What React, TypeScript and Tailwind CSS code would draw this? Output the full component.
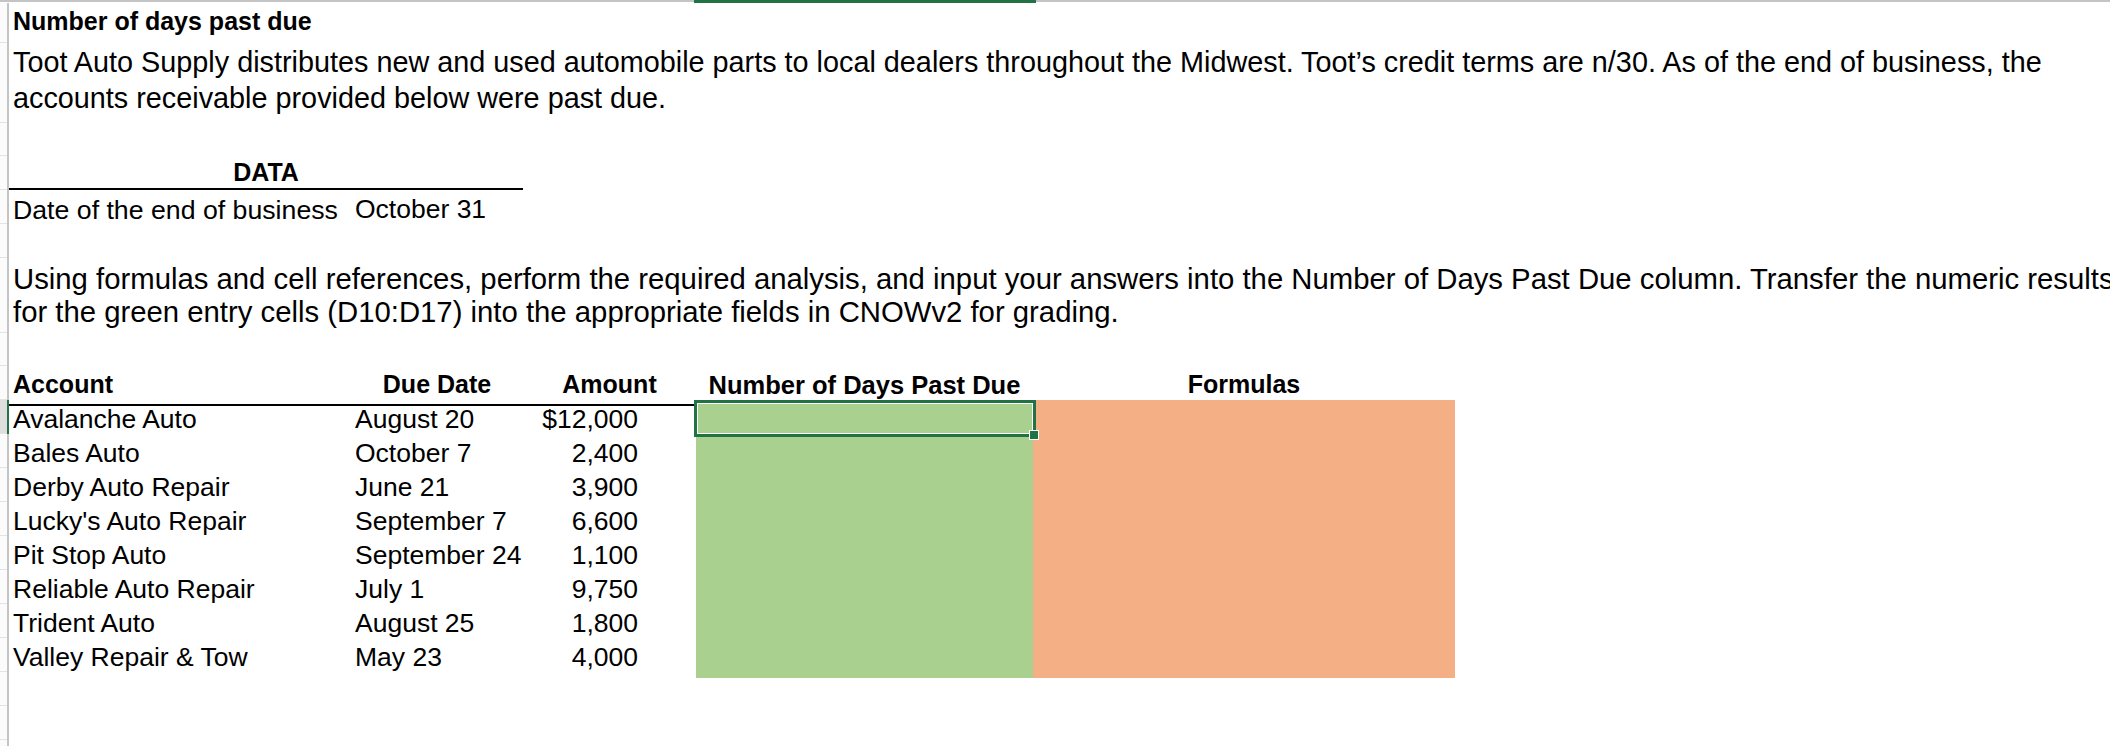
import type { ReactNode } from 'react'

const accounts = [
  ['Avalanche Auto', 'August 20', '$12,000'],
  ['Bales Auto', 'October 7', '2,400'],
  ['Derby Auto Repair', 'June 21', '3,900'],
  ["Lucky's Auto Repair", 'September 7', '6,600'],
  ['Pit Stop Auto', 'September 24', '1,100'],
  ['Reliable Auto Repair', 'July 1', '9,750'],
  ['Trident Auto', 'August 25', '1,800'],
  ['Valley Repair & Tow', 'May 23', '4,000'],
]

const cols = 'grid h-full grid-cols-[342px_172px_173px_337px_422px]'

const Row = ({ h, sel = false, children }: { h: string; sel?: boolean; children?: ReactNode }) => (
  <div className={`flex ${h}`}>
    <div
      className={`w-[7px] shrink-0 border-b border-[#e3e3e3] ${sel ? 'bg-[#dedede]' : 'bg-[#fbfbfb]'}`}
    />
    <div className={`w-[2px] shrink-0 ${sel ? 'bg-[#217346]' : 'bg-[#c4c4c4]'}`} />
    <div className="min-w-0 flex-1 whitespace-nowrap">{children}</div>
  </div>
)

const App = () => {
  return (
    <div className="h-[746px] w-[2110px] overflow-hidden bg-white font-['Liberation_Sans',Arial,sans-serif] text-black">
      {/* column header edge, selected column marked in green */}
      <div className="flex h-[3px] items-start">
        <div className="h-[2px] w-[694px] bg-[#c4c4c4]" />
        <div className="h-[3px] w-[342px] bg-[#217346]" />
        <div className="h-[2px] flex-1 bg-[#c4c4c4]" />
      </div>

      <Row h="h-[40px]">
        <p className="pl-[4px] pt-[3px] text-[25px] leading-[30px] font-bold">
          Number of days past due
        </p>
      </Row>

      <Row h="h-[80px]">
        <p className="pl-[4px] pt-[1px] text-[28.8px] leading-[36px]">
          Toot Auto Supply distributes new and used automobile parts to local dealers throughout the
          Midwest. Toot’s credit terms are n/30. As of the end of business, the
          <br />
          accounts receivable provided below were past due.
        </p>
      </Row>

      <Row h="h-[33px]" />

      <Row h="h-[34px]">
        <div className={cols}>
          <div className="col-span-2 border-b-2 border-black text-center text-[25px] leading-[32px] font-bold">
            DATA
          </div>
        </div>
      </Row>

      <Row h="h-[34px]">
        <div className={`${cols} items-center`}>
          <span className="pb-[2px] pl-[4px] text-[26.7px]">Date of the end of business</span>
          <span className="pb-[2px] pl-[4px] text-[26.5px]">October 31</span>
        </div>
      </Row>

      <Row h="h-[34px]" />

      <Row h="h-[75px]">
        <p className="pl-[4px] pt-[4px] text-[29.3px] leading-[33px]">
          Using formulas and cell references, perform the required analysis, and input your answers
          into the Number of Days Past Due column. Transfer the numeric results
          <br />
          for the green entry cells (D10:D17) into the appropriate fields in CNOWv2 for grading.
        </p>
      </Row>

      <Row h="h-[33px]" />

      <Row h="h-[34px]">
        <div className={`${cols} text-[25px] font-bold`}>
          <div className="flex items-center border-b-2 border-black pl-[4px]">Account</div>
          <div className="flex items-center justify-center border-b-2 border-black">Due Date</div>
          <div className="flex items-center justify-center border-b-2 border-black">Amount</div>
          <div className="flex items-center justify-center border-b-2 border-black text-[25.5px]">
            Number of Days Past Due
          </div>
          <div className="flex items-center justify-center border-b-2 border-black">Formulas</div>
        </div>
      </Row>

      {accounts.map(([name, due, amount], i) => (
        <Row key={name} h="h-[34px]" sel={i === 0}>
          <div className={`${cols} text-[26.5px]`}>
            <div className="flex items-center pl-[4px]">{name}</div>
            <div className="flex items-center pl-[4px]">{due}</div>
            <div className="flex items-center justify-end pr-[58px]">{amount}</div>
            <div className="relative bg-[#a9d08e]">
              {i === 0 && (
                <div className="absolute -left-[2px] top-0 z-10 h-[37px] w-[342px] border-[3px] border-[#217346]">
                  <div className="h-full w-full border border-white" />
                  <div className="absolute -right-[6px] -bottom-[6px] h-[10px] w-[10px] border border-white bg-[#217346]" />
                </div>
              )}
            </div>
            <div className="bg-[#f4b084]" />
          </div>
        </Row>
      ))}

      <Row h="h-[34px]" />
      <Row h="h-[34px]" />
      <Row h="h-[34px]" />
    </div>
  )
}

export default App
